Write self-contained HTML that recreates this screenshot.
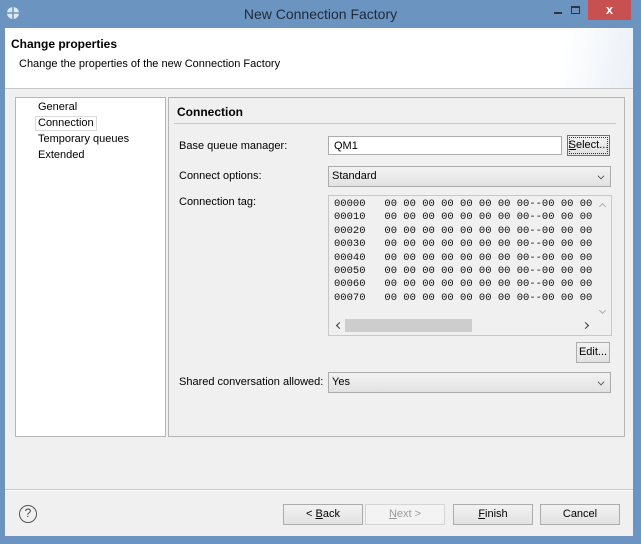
<!DOCTYPE html>
<html><head><style>
*{margin:0;padding:0;box-sizing:border-box}
body{width:641px;height:544px;background:#6b94c1;font-family:"Liberation Sans",sans-serif;font-size:11px;color:#000;position:relative;overflow:hidden}
.a{position:absolute}
.btn{position:absolute;height:21px;background:linear-gradient(#f2f2f2,#e2e2e2);border:1px solid #acacac;text-align:center;line-height:19px;font-size:11px}
.lbl{position:absolute;font-size:11px}
.hex{position:absolute;left:334px;top:198px;font-family:"Liberation Mono",monospace;font-size:10.5px;line-height:13.4px;white-space:pre;color:#111}
.chev{position:absolute;right:6px;top:6px;width:6px;height:6px;border-right:1.3px solid #444;border-bottom:1.3px solid #444;transform:rotate(45deg) scale(.8)}
</style></head><body>
<div class="a" style="left:0;top:0;width:641px;height:28px;background:#6b94c1"></div>
<svg class="a" style="left:6px;top:6px" width="14" height="14" viewBox="0 0 14 14"><circle cx="7" cy="7" r="6" fill="#dfe7f2"/><path d="M7 1v12M1 7h12" stroke="#6b94c1" stroke-width="1.5"/></svg>
<div class="a" style="left:0;width:641px;top:6px;text-align:center;font-size:14px;color:#1e2b3a">New Connection Factory</div>
<div class="a" style="left:554px;top:12px;width:8px;height:1.5px;background:#333"></div>
<div class="a" style="left:571px;top:6px;width:9px;height:8px;border:1px solid #333;border-top-width:2px"></div>
<div class="a" style="left:588px;top:0;width:43px;height:20px;background:#c75050;color:#fff;text-align:center;font-size:13px;line-height:20px;font-weight:bold">x</div>
<div class="a" style="left:5px;top:28px;width:628px;height:508px;background:#f0f0f0"></div>
<div class="a" style="left:5px;top:28px;width:628px;height:60px;background:linear-gradient(100deg,#fff 88%,#eaf0f7 100%)"></div>
<div class="a" style="left:5px;top:88px;width:628px;height:1px;background:#c8c8c8"></div>
<div class="a" style="left:11px;top:37px;font-weight:bold;font-size:12px">Change properties</div>
<div class="a" style="left:19px;top:58px">Change the properties of the new Connection Factory</div>
<div class="a" style="left:15px;top:97px;width:151px;height:340px;background:#fff;border:1px solid #b5b5b5"></div>
<div class="a" style="left:38px;top:101px">General</div>
<div class="a" style="left:35px;top:116px;width:62px;height:15px;border:1px solid #dadada"></div>
<div class="a" style="left:38px;top:117px">Connection</div>
<div class="a" style="left:38px;top:133px">Temporary queues</div>
<div class="a" style="left:38px;top:149px">Extended</div>
<div class="a" style="left:168px;top:97px;width:457px;height:340px;border:1px solid #b5b5b5"></div>
<div class="a" style="left:177px;top:105px;font-weight:bold;font-size:12px">Connection</div>
<div class="a" style="left:174px;top:123px;width:442px;height:1px;background:#c8c8c8"></div>
<div class="lbl" style="left:179px;top:140px">Base queue manager:</div>
<div class="a" style="left:328px;top:136px;width:234px;height:19px;background:#fff;border:1px solid #acacac;padding:3px 5px">QM1</div>
<div class="btn" style="left:567px;top:135px;width:43px;border-color:#3c7fb1;outline:1px dotted #333;outline-offset:-3px"><u>S</u>elect...</div>
<div class="lbl" style="left:179px;top:170px">Connect options:</div>
<div class="btn" style="left:328px;top:166px;width:283px;text-align:left;padding-left:3px">Standard<span class="chev"></span></div>
<div class="lbl" style="left:179px;top:196px">Connection tag:</div>
<div class="a" style="left:328px;top:195px;width:284px;height:141px;border:1px solid #c8c8c8;background:#f0f0f0"></div>
<div class="hex">00000   00 00 00 00 00 00 00 00--00 00 00
00010   00 00 00 00 00 00 00 00--00 00 00
00020   00 00 00 00 00 00 00 00--00 00 00
00030   00 00 00 00 00 00 00 00--00 00 00
00040   00 00 00 00 00 00 00 00--00 00 00
00050   00 00 00 00 00 00 00 00--00 00 00
00060   00 00 00 00 00 00 00 00--00 00 00
00070   00 00 00 00 00 00 00 00--00 00 00</div>
<div class="a" style="left:600px;top:204px;width:5px;height:5px;border-left:1px solid #aaa;border-top:1px solid #aaa;transform:rotate(45deg)"></div>
<div class="a" style="left:600px;top:308px;width:5px;height:5px;border-right:1px solid #aaa;border-bottom:1px solid #aaa;transform:rotate(45deg)"></div>
<div class="a" style="left:345px;top:319px;width:127px;height:13px;background:#cdcdcd"></div>
<div class="a" style="left:337px;top:323px;width:5px;height:5px;border-left:1.3px solid #333;border-bottom:1.3px solid #333;transform:rotate(45deg)"></div>
<div class="a" style="left:583px;top:323px;width:5px;height:5px;border-right:1.3px solid #333;border-top:1.3px solid #333;transform:rotate(45deg)"></div>
<div class="btn" style="left:576px;top:342px;width:34px">Edit...</div>
<div class="lbl" style="left:179px;top:376px">Shared conversation allowed:</div>
<div class="btn" style="left:328px;top:372px;width:283px;text-align:left;padding-left:3px">Yes<span class="chev"></span></div>
<div class="a" style="left:5px;top:489px;width:628px;height:1px;background:#c8c8c8"></div>
<div class="a" style="left:5px;top:490px;width:628px;height:1px;background:#fff"></div>
<div class="a" style="left:19px;top:505px;width:18px;height:18px;border:1.5px solid #555;border-radius:50%;text-align:center;line-height:15px;font-size:12px;color:#444">?</div>
<div class="btn" style="left:283px;top:504px;width:80px">&lt; <u>B</u>ack</div>
<div class="btn" style="left:365px;top:504px;width:80px;color:#9a9a9a;background:#f3f3f3;border-color:#d5d5d5"><u>N</u>ext &gt;</div>
<div class="btn" style="left:453px;top:504px;width:80px"><u>F</u>inish</div>
<div class="btn" style="left:540px;top:504px;width:80px">Cancel</div>
</body></html>
